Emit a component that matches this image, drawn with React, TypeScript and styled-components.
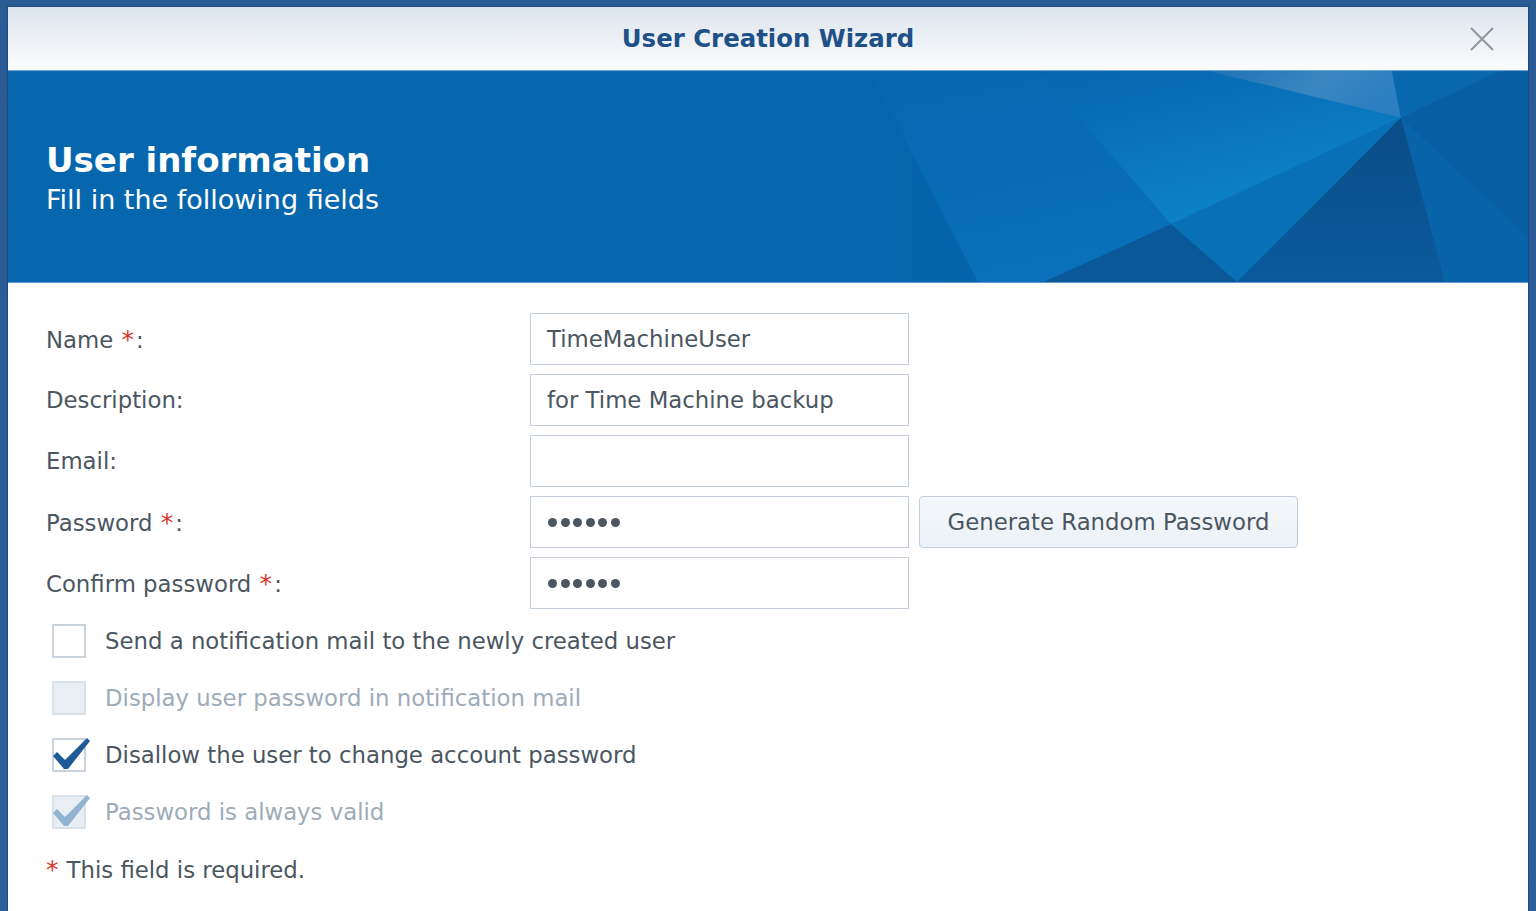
import React from "react";
import styled, { createGlobalStyle } from "styled-components";

const GlobalStyle = createGlobalStyle`
  html, body {
    margin: 0;
    padding: 0;
    background: #2c5d96;
  }
  * { box-sizing: border-box; }
`;

const FONT = `"DejaVu Sans", Verdana, "Liberation Sans", sans-serif`;

const Page = styled.div`
  height: 911px;
  overflow: hidden;
  padding: 6px 7px 0 7px;
  background: linear-gradient(180deg, #2a5b94 0%, #2d5f99 100%);
  font-family: ${FONT};
`;

const Dialog = styled.div`
  display: flex;
  flex-direction: column;
  background: #ffffff;
  border: 1px solid #1f4b80;
  border-bottom: none;
  min-height: 940px;
`;

const TitleBar = styled.div`
  position: relative;
  height: 63px;
  display: flex;
  align-items: center;
  justify-content: center;
  background: linear-gradient(180deg, #dce4ed 0%, #eef2f6 55%, #fbfcfd 100%);
`;

const Title = styled.div`
  font-size: 24.4px;
  font-weight: bold;
  color: #1e5187;
`;

const CloseButton = styled.div`
  position: absolute;
  right: 33px;
  top: 19px;
  width: 26px;
  height: 26px;
  display: flex;
  align-items: center;
  justify-content: center;
`;

const Banner = styled.div`
  position: relative;
  height: 213px;
  overflow: hidden;
  background: #0667ae;
  border-top: 1px solid #6fa6d8;
  border-bottom: 1px solid #5d9bd3;
`;

const BannerArt = styled.svg`
  position: absolute;
  inset: 0;
  width: 100%;
  height: 100%;
`;

const BannerText = styled.div`
  position: relative;
  padding: 69px 0 0 38px;
  display: flex;
  flex-direction: column;
  color: #ffffff;
`;

const BannerTitle = styled.div`
  font-size: 34px;
  font-weight: bold;
  line-height: 40px;
`;

const BannerSubtitle = styled.div`
  font-size: 27px;
  line-height: 32px;
  margin-top: 4px;
`;

const Body = styled.div`
  padding: 30px 38px 0 38px;
  display: flex;
  flex-direction: column;
`;

const FieldList = styled.div`
  display: flex;
  flex-direction: column;
  gap: 9px;
`;

const FieldRow = styled.div`
  display: grid;
  grid-template-columns: 484px 379px auto;
  align-items: center;
  height: 52px;
`;

const Label = styled.div`
  font-size: 22.8px;
  color: #4b5661;
`;

const Req = styled.span`
  color: #d9372a;
  font-size: 1.1em;
  margin: 0 2px 0 1px;
`;

const Field = styled.div`
  height: 52px;
  border: 1px solid #c4cfda;
  background: #ffffff;
  padding-left: 16px;
  display: flex;
  align-items: center;
  font-size: 22.8px;
  color: #4b5661;
`;

const Dots = styled.div`
  display: flex;
  gap: 3.5px;
  margin-left: 1px;
`;

const Dot = styled.span`
  width: 9px;
  height: 9px;
  border-radius: 50%;
  background: #4b5661;
`;

const Button = styled.button`
  margin-left: 10px;
  width: 379px;
  height: 52px;
  border: 1px solid #c3cedb;
  border-radius: 4px;
  background: linear-gradient(180deg, #f5f8fb 0%, #ebf1f7 100%);
  font-family: ${FONT};
  font-size: 22.8px;
  color: #4b5661;
  padding: 0;
  cursor: pointer;
`;

const CheckList = styled.div`
  margin-top: 3px;
  display: flex;
  flex-direction: column;
`;

const CheckRow = styled.div`
  height: 57px;
  display: flex;
  align-items: center;
  gap: 19px;
  padding-left: 6px;
`;

const Box = styled.div<{ $disabled?: boolean }>`
  position: relative;
  width: 34px;
  height: 34px;
  flex: none;
  border: 2px solid ${(p) => (p.$disabled ? "#d9e1ea" : "#c9d3de")};
  background: ${(p) => (p.$disabled ? "#e8eef4" : "#ffffff")};
`;

const CheckMark = styled.svg`
  position: absolute;
  left: -1px;
  top: -3px;
  width: 38px;
  height: 34px;
  overflow: visible;
`;

const CheckLabel = styled.div<{ $disabled?: boolean }>`
  font-size: 22.8px;
  color: ${(p) => (p.$disabled ? "#9eabb8" : "#4b5661")};
`;

const Footer = styled.div`
  margin-top: 15px;
  line-height: 30px;
  font-size: 22.8px;
  color: #4b5661;
`;

const FooterStar = styled.span`
  color: #d9372a;
  font-size: 1.1em;
  margin-right: 8px;
`;

type CheckProps = { label: string; checked?: boolean; disabled?: boolean };

function Check({ label, checked, disabled }: CheckProps) {
  return (
    <CheckRow>
      <Box $disabled={disabled}>
        {checked && (
          <CheckMark viewBox="0 0 38 34">
            <polygon
              points="4,15 12,23 34,1 37,4 15,32 11,32 0,19"
              fill={disabled ? "#93b3d3" : "#1d5a96"}
            />
          </CheckMark>
        )}
      </Box>
      <CheckLabel $disabled={disabled}>{label}</CheckLabel>
    </CheckRow>
  );
}

function PasswordDots() {
  return (
    <Dots>
      {Array.from({ length: 6 }).map((_, i) => (
        <Dot key={i} />
      ))}
    </Dots>
  );
}

function Art() {
  return (
    <BannerArt viewBox="0 0 1520 212" preserveAspectRatio="none">
      <defs>
        <linearGradient id="gMid" x1="0" y1="0" x2="0.3" y2="1">
          <stop offset="0" stopColor="#0667ae" />
          <stop offset="1" stopColor="#0a70ba" />
        </linearGradient>
        <linearGradient id="gGlow" x1="0" y1="0" x2="0.55" y2="1">
          <stop offset="0" stopColor="#0665ad" />
          <stop offset="1" stopColor="#0c84ca" />
        </linearGradient>
        <linearGradient id="gLight" x1="0" y1="0" x2="1" y2="0.3">
          <stop offset="0" stopColor="#1f72b4" />
          <stop offset="0.6" stopColor="#3a86c2" />
          <stop offset="1" stopColor="#2c7fc0" />
        </linearGradient>
        <linearGradient id="gDark" x1="0" y1="0" x2="0" y2="1">
          <stop offset="0" stopColor="#094c88" />
          <stop offset="1" stopColor="#0b5a9c" />
        </linearGradient>
        <linearGradient id="gLeft" x1="0" y1="0" x2="1" y2="0">
          <stop offset="0" stopColor="#0667ae" />
          <stop offset="1" stopColor="#0664aa" />
        </linearGradient>
      </defs>
      <polygon points="700,0 862,0 970,212 760,212" fill="url(#gLeft)" />
      <polygon points="862,0 1031,0 1163,154 1036,212 970,212" fill="url(#gMid)" />
      <polygon points="1031,0 1200,0 1393,47 1163,154" fill="url(#gGlow)" />
      <polygon points="1200,0 1384,0 1393,47" fill="url(#gLight)" />
      <polygon points="1384,0 1492,0 1393,47" fill="#0967ae" />
      <polygon points="1492,0 1520,0 1520,168 1393,47" fill="#095ea3" />
      <polygon points="1393,47 1520,168 1520,212 1437,212" fill="#0963a9" />
      <polygon points="1163,154 1393,47 1229,212" fill="#0871b6" />
      <polygon points="1393,47 1229,212 1437,212" fill="url(#gDark)" />
      <polygon points="1036,212 1163,154 1229,212" fill="#0b5898" />
    </BannerArt>
  );
}

export default function App() {
  return (
    <>
      <GlobalStyle />
      <Page>
        <Dialog>
          <TitleBar>
            <Title>User Creation Wizard</Title>
            <CloseButton>
              <svg width="24" height="24" viewBox="0 0 24 24">
                <path
                  d="M1 1 L23 23 M23 1 L1 23"
                  stroke="#8f979f"
                  strokeWidth="2"
                  fill="none"
                />
              </svg>
            </CloseButton>
          </TitleBar>
          <Banner>
            <Art />
            <BannerText>
              <BannerTitle>User information</BannerTitle>
              <BannerSubtitle>Fill in the following fields</BannerSubtitle>
            </BannerText>
          </Banner>
          <Body>
            <FieldList>
              <FieldRow>
                <Label>
                  Name <Req>*</Req>:
                </Label>
                <Field>TimeMachineUser</Field>
              </FieldRow>
              <FieldRow>
                <Label>Description:</Label>
                <Field>for Time Machine backup</Field>
              </FieldRow>
              <FieldRow>
                <Label>Email:</Label>
                <Field />
              </FieldRow>
              <FieldRow>
                <Label>
                  Password <Req>*</Req>:
                </Label>
                <Field>
                  <PasswordDots />
                </Field>
                <Button>Generate Random Password</Button>
              </FieldRow>
              <FieldRow>
                <Label>
                  Confirm password <Req>*</Req>:
                </Label>
                <Field>
                  <PasswordDots />
                </Field>
              </FieldRow>
            </FieldList>
            <CheckList>
              <Check label="Send a notification mail to the newly created user" />
              <Check label="Display user password in notification mail" disabled />
              <Check label="Disallow the user to change account password" checked />
              <Check label="Password is always valid" checked disabled />
            </CheckList>
            <Footer>
              <FooterStar>*</FooterStar>This field is required.
            </Footer>
          </Body>
        </Dialog>
      </Page>
    </>
  );
}
